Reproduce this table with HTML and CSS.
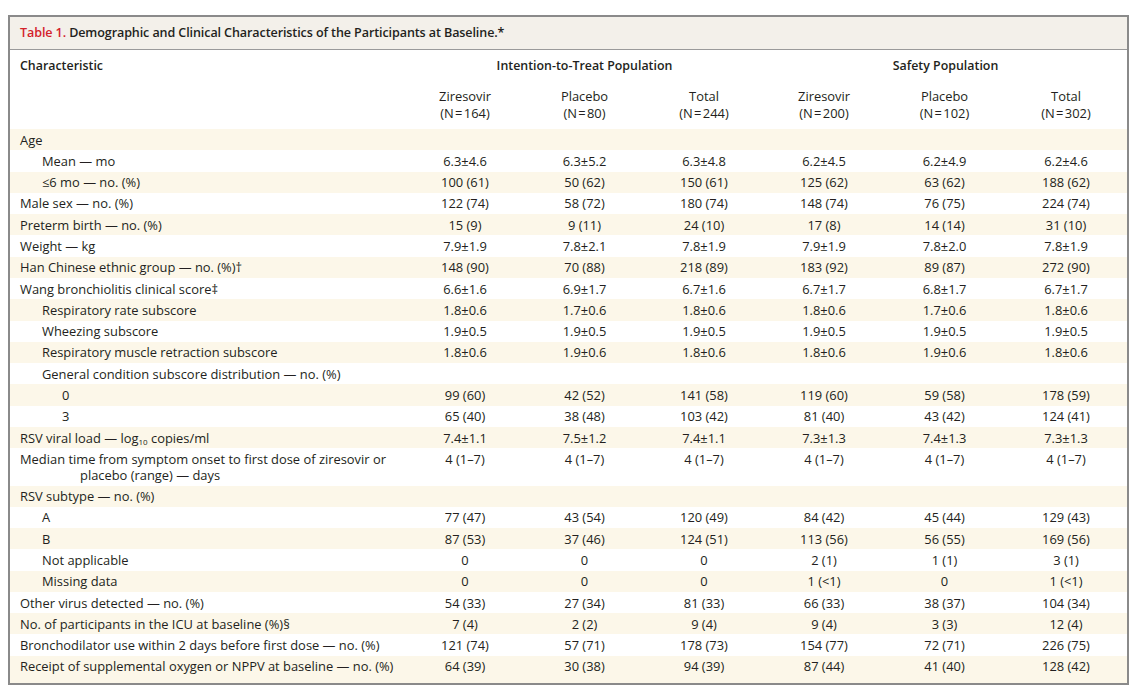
FILE: index.html
```html
<!DOCTYPE html>
<html lang="en">
<head>
<meta charset="utf-8">
<title>Table 1</title>
<link rel="stylesheet" href="styles.css">
</head>
<body>
<div class="frame">
  <div class="title-bar"><span class="tnum">Table 1.</span> Demographic and Clinical Characteristics of the Participants at Baseline.*</div>
  <table class="data">
    <colgroup>
      <col class="c-label">
      <col class="c-v1"><col class="c-v2"><col class="c-v3">
      <col class="c-v4"><col class="c-v5"><col class="c-v6">
    </colgroup>
    <thead>
      <tr class="h1">
        <th class="lab">Characteristic</th>
        <th colspan="3">Intention-to-Treat Population</th>
        <th colspan="3">Safety Population</th>
      </tr>
      <tr class="h2">
        <th></th>
        <th>Ziresovir<br>(N&#8202;=&#8202;164)</th>
        <th>Placebo<br>(N&#8202;=&#8202;80)</th>
        <th>Total<br>(N&#8202;=&#8202;244)</th>
        <th>Ziresovir<br>(N&#8202;=&#8202;200)</th>
        <th>Placebo<br>(N&#8202;=&#8202;102)</th>
        <th>Total<br>(N&#8202;=&#8202;302)</th>
      </tr>
    </thead>
    <tbody>
      <tr><td class="lab">Age</td><td></td><td></td><td></td><td></td><td></td><td></td></tr>
      <tr><td class="lab i1">Mean — mo</td><td>6.3±4.6</td><td>6.3±5.2</td><td>6.3±4.8</td><td>6.2±4.5</td><td>6.2±4.9</td><td>6.2±4.6</td></tr>
      <tr><td class="lab i1">≤6 mo — no. (%)</td><td>100 (61)</td><td>50 (62)</td><td>150 (61)</td><td>125 (62)</td><td>63 (62)</td><td>188 (62)</td></tr>
      <tr><td class="lab">Male sex — no. (%)</td><td>122 (74)</td><td>58 (72)</td><td>180 (74)</td><td>148 (74)</td><td>76 (75)</td><td>224 (74)</td></tr>
      <tr><td class="lab">Preterm birth — no. (%)</td><td>15 (9)</td><td>9 (11)</td><td>24 (10)</td><td>17 (8)</td><td>14 (14)</td><td>31 (10)</td></tr>
      <tr><td class="lab">Weight — kg</td><td>7.9±1.9</td><td>7.8±2.1</td><td>7.8±1.9</td><td>7.9±1.9</td><td>7.8±2.0</td><td>7.8±1.9</td></tr>
      <tr><td class="lab">Han Chinese ethnic group — no. (%)†</td><td>148 (90)</td><td>70 (88)</td><td>218 (89)</td><td>183 (92)</td><td>89 (87)</td><td>272 (90)</td></tr>
      <tr><td class="lab">Wang bronchiolitis clinical score‡</td><td>6.6±1.6</td><td>6.9±1.7</td><td>6.7±1.6</td><td>6.7±1.7</td><td>6.8±1.7</td><td>6.7±1.7</td></tr>
      <tr><td class="lab i1">Respiratory rate subscore</td><td>1.8±0.6</td><td>1.7±0.6</td><td>1.8±0.6</td><td>1.8±0.6</td><td>1.7±0.6</td><td>1.8±0.6</td></tr>
      <tr><td class="lab i1">Wheezing subscore</td><td>1.9±0.5</td><td>1.9±0.5</td><td>1.9±0.5</td><td>1.9±0.5</td><td>1.9±0.5</td><td>1.9±0.5</td></tr>
      <tr><td class="lab i1">Respiratory muscle retraction subscore</td><td>1.8±0.6</td><td>1.9±0.6</td><td>1.8±0.6</td><td>1.8±0.6</td><td>1.9±0.6</td><td>1.8±0.6</td></tr>
      <tr><td class="lab i1">General condition subscore distribution — no. (%)</td><td></td><td></td><td></td><td></td><td></td><td></td></tr>
      <tr><td class="lab i2">0</td><td>99 (60)</td><td>42 (52)</td><td>141 (58)</td><td>119 (60)</td><td>59 (58)</td><td>178 (59)</td></tr>
      <tr><td class="lab i2">3</td><td>65 (40)</td><td>38 (48)</td><td>103 (42)</td><td>81 (40)</td><td>43 (42)</td><td>124 (41)</td></tr>
      <tr><td class="lab">RSV viral load — log<sub>10</sub> copies/ml</td><td>7.4±1.1</td><td>7.5±1.2</td><td>7.4±1.1</td><td>7.3±1.3</td><td>7.4±1.3</td><td>7.3±1.3</td></tr>
      <tr class="tall"><td class="lab hang">Median time from symptom onset to first dose of ziresovir or placebo (range) — days</td><td>4 (1–7)</td><td>4 (1–7)</td><td>4 (1–7)</td><td>4 (1–7)</td><td>4 (1–7)</td><td>4 (1–7)</td></tr>
      <tr><td class="lab">RSV subtype — no. (%)</td><td></td><td></td><td></td><td></td><td></td><td></td></tr>
      <tr><td class="lab i1">A</td><td>77 (47)</td><td>43 (54)</td><td>120 (49)</td><td>84 (42)</td><td>45 (44)</td><td>129 (43)</td></tr>
      <tr><td class="lab i1">B</td><td>87 (53)</td><td>37 (46)</td><td>124 (51)</td><td>113 (56)</td><td>56 (55)</td><td>169 (56)</td></tr>
      <tr><td class="lab i1">Not applicable</td><td>0</td><td>0</td><td>0</td><td>2 (1)</td><td>1 (1)</td><td>3 (1)</td></tr>
      <tr><td class="lab i1">Missing data</td><td>0</td><td>0</td><td>0</td><td>1 (&lt;1)</td><td>0</td><td>1 (&lt;1)</td></tr>
      <tr><td class="lab">Other virus detected — no. (%)</td><td>54 (33)</td><td>27 (34)</td><td>81 (33)</td><td>66 (33)</td><td>38 (37)</td><td>104 (34)</td></tr>
      <tr><td class="lab">No. of participants in the ICU at baseline (%)§</td><td>7 (4)</td><td>2 (2)</td><td>9 (4)</td><td>9 (4)</td><td>3 (3)</td><td>12 (4)</td></tr>
      <tr><td class="lab">Bronchodilator use within 2 days before first dose — no. (%)</td><td>121 (74)</td><td>57 (71)</td><td>178 (73)</td><td>154 (77)</td><td>72 (71)</td><td>226 (75)</td></tr>
      <tr class="last"><td class="lab">Receipt of supplemental oxygen or NPPV at baseline — no. (%)</td><td>64 (39)</td><td>30 (38)</td><td>94 (39)</td><td>87 (44)</td><td>41 (40)</td><td>128 (42)</td></tr>
    </tbody>
  </table>
</div>
</body>
</html>
```
FILE: styles.css
```css
html, body {
  margin: 0;
  padding: 0;
  background: #ffffff;
}

body {
  font-family: "Open Sans", Lato, "Liberation Sans", sans-serif;
  font-size: 12.9px;
  color: #231f20;
}

.frame {
  margin: 15px 8px 0 8px;
  width: 1117px;
  border: 2px solid #8a8a8a;
  background: #ffffff;
}

.title-bar {
  background: #f3f0ea;
  height: 32px;
  line-height: 31px;
  padding-left: 10px;
  border-bottom: 1px solid #9a9a9a;
  font-weight: 600;
  font-size: 12.55px;
  letter-spacing: -0.1px;
  color: #231f20;
}

.tnum {
  color: #d3222a;
  font-weight: 600;
}

.data {
  width: 100%;
  border-collapse: collapse;
  table-layout: fixed;
  padding: 0;
}

.c-label { width: 395px; }
.c-v1 { width: 120px; }
.c-v2 { width: 119px; }
.c-v3 { width: 120px; }
.c-v4 { width: 120px; }
.c-v5 { width: 121px; }
.c-v6 { width: 122px; }

.data th {
  font-weight: 400;
  text-align: center;
  vertical-align: top;
  padding: 0;
}

.data .h1 th {
  font-weight: 600;
  font-size: 12.4px;
  padding-top: 8px;
  line-height: 16px;
  height: 16px;
}

.data .h2 th {
  padding-top: 14px;
  padding-bottom: 7px;
  line-height: 17px;
}

.data th.lab {
  text-align: left;
  padding-left: 10px;
}

.data td {
  text-align: center;
  padding: 2.65px 0;
  line-height: 16px;
  vertical-align: top;
  white-space: nowrap;
}

.data td.lab {
  text-align: left;
  padding-left: 10px;
  white-space: normal;
}

.data td.i1 { padding-left: 32px; }
.data td.i2 { padding-left: 52px; }

.data td.hang {
  padding-left: 70px;
  text-indent: -60px;
  padding-right: 6px;
}

.data tbody tr:nth-child(odd) { background: #fcf7e9; }
.data tbody tr:nth-child(even) { background: #ffffff; }

.data tbody tr.last td { padding-bottom: 9px; }

sub {
  font-size: 8px;
  line-height: 0;
  vertical-align: -2px;
}
```
